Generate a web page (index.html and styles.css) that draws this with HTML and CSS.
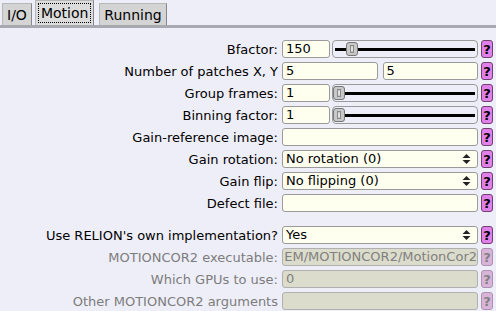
FILE: index.html
```
<!DOCTYPE html>
<html>
<head>
<meta charset="utf-8">
<link rel="stylesheet" href="styles.css">
</head>
<body>
<div class="tabs">
  <div class="tab">I/O</div>
  <div class="tab active"><span class="focus">Motion</span></div>
  <div class="tab">Running</div>
</div>
<div class="panel">
  <div class="row">
    <label class="lbl">Bfactor:</label>
    <div class="ctl">
      <div class="inp num">150</div>
      <div class="slider"><div class="track"></div><div class="knob" style="left:13px"></div></div>
    </div>
    <div class="help">?</div>
  </div>
  <div class="row">
    <label class="lbl">Number of patches X, Y</label>
    <div class="ctl gap4">
      <div class="inp half">5</div>
      <div class="inp half">5</div>
    </div>
    <div class="help">?</div>
  </div>
  <div class="row">
    <label class="lbl">Group frames:</label>
    <div class="ctl">
      <div class="inp num">1</div>
      <div class="slider"><div class="track"></div><div class="knob" style="left:0px"></div></div>
    </div>
    <div class="help">?</div>
  </div>
  <div class="row">
    <label class="lbl">Binning factor:</label>
    <div class="ctl">
      <div class="inp num">1</div>
      <div class="slider"><div class="track"></div><div class="knob" style="left:0px"></div></div>
    </div>
    <div class="help">?</div>
  </div>
  <div class="row">
    <label class="lbl">Gain-reference image:</label>
    <div class="ctl"><div class="inp wide"></div></div>
    <div class="help">?</div>
  </div>
  <div class="row">
    <label class="lbl">Gain rotation:</label>
    <div class="ctl"><div class="inp wide sel"><span>No rotation (0)</span><svg class="arr" width="9" height="12" viewBox="0 0 9 12"><path d="M0.5 5 L4.5 1 L8.5 5 Z M0.5 7 L4.5 11 L8.5 7 Z" fill="#222"/></svg></div></div>
    <div class="help">?</div>
  </div>
  <div class="row">
    <label class="lbl">Gain flip:</label>
    <div class="ctl"><div class="inp wide sel"><span>No flipping (0)</span><svg class="arr" width="9" height="12" viewBox="0 0 9 12"><path d="M0.5 5 L4.5 1 L8.5 5 Z M0.5 7 L4.5 11 L8.5 7 Z" fill="#222"/></svg></div></div>
    <div class="help">?</div>
  </div>
  <div class="row">
    <label class="lbl">Defect file:</label>
    <div class="ctl"><div class="inp wide"></div></div>
    <div class="help">?</div>
  </div>
  <div class="row spaced">
    <label class="lbl">Use RELION's own implementation?</label>
    <div class="ctl"><div class="inp wide sel"><span>Yes</span><svg class="arr" width="9" height="12" viewBox="0 0 9 12"><path d="M0.5 5 L4.5 1 L8.5 5 Z M0.5 7 L4.5 11 L8.5 7 Z" fill="#222"/></svg></div></div>
    <div class="help">?</div>
  </div>
  <div class="row dis">
    <label class="lbl">MOTIONCOR2 executable:</label>
    <div class="ctl"><div class="inp wide clip">EM/MOTIONCOR2/MotionCor2</div></div>
    <div class="help">?</div>
  </div>
  <div class="row dis">
    <label class="lbl">Which GPUs to use:</label>
    <div class="ctl"><div class="inp wide">0</div></div>
    <div class="help">?</div>
  </div>
  <div class="row dis">
    <label class="lbl">Other MOTIONCOR2 arguments</label>
    <div class="ctl"><div class="inp wide"></div></div>
    <div class="help">?</div>
  </div>
</div>
</body>
</html>
```
FILE: styles.css
```
html, body {
  margin: 0;
  padding: 0;
  background: #eeeef8;
  font-family: "DejaVu Sans", sans-serif;
  font-size: 12px;
  color: #000;
  width: 496px;
  height: 311px;
  overflow: hidden;
}
.tabs {
  display: flex;
  align-items: flex-end;
  height: 25px;
  padding-left: 2px;
  gap: 3px;
  border-bottom: 3px solid #a8a8b0;
}
.tab {
  height: 22px;
  padding: 0 4px;
  background: #d4d4d4;
  border: 1px solid #b8b8b8;
  border-bottom: none;
  border-right: 1px solid #888;
  font-size: 14px;
  line-height: 22px;
  box-sizing: border-box;
}
.tab.active {
  height: 25px;
  background: #dcdcdc;
  padding: 2px 2px 0;
  line-height: 20px;
}
.tab.active .focus {
  display: block;
  border: 1px dotted #000;
  padding: 0 2px;
  height: 20px;
  box-sizing: border-box;
  line-height: 18px;
}
.tab:nth-child(3) { margin-left: 2px; }
.panel {
  padding-top: 12px;
  display: flex;
  flex-direction: column;
  gap: 4px;
}
.row {
  display: flex;
  align-items: center;
  height: 18px;
}
.row.spaced { margin-top: 10px; }
.lbl {
  width: 282px;
  text-align: right;
  padding-right: 4px;
  box-sizing: border-box;
  white-space: nowrap;
  font-size: 13px;
}
.ctl {
  width: 196px;
  display: flex;
  gap: 2px;
  height: 18px;
}
.ctl.gap4 { gap: 5px; }
.inp {
  height: 18px;
  box-sizing: border-box;
  background: #fffff0;
  border: 1px solid #9a9a9a;
  border-radius: 3px;
  font-size: 13px;
  line-height: 16px;
  padding-left: 3px;
  white-space: nowrap;
  overflow: hidden;
}
.num { width: 48px; }
.half { flex: 1; }
.wide { flex: 1; }
.sel { display: flex; align-items: center; justify-content: space-between; padding-right: 6px; }
.arr { flex: none; }
.slider {
  flex: 1;
  position: relative;
  height: 18px;
  box-sizing: border-box;
  border: 1px solid #9a9a9a;
  border-radius: 4px;
  background: #eeeef8;
}
.track {
  position: absolute;
  left: 2px;
  right: 2px;
  top: 7px;
  height: 3px;
  background: #000;
}
.knob {
  position: absolute;
  top: 1px;
  width: 12px;
  height: 14px;
  box-sizing: border-box;
  background: #c8c8c8;
  border: 1px solid #777;
  border-radius: 3px;
  box-shadow: inset 3px 0 0 #c8c8c8, inset -3px 0 0 #c8c8c8, inset 0 2px 0 #c8c8c8, inset 0 -2px 0 #c8c8c8, inset 0 0 0 4px #888;
}
.knob::after {
  content: "";
  position: absolute;
  left: 3px;
  right: 3px;
  top: 2px;
  bottom: 2px;
  background: #e4e4e4;
  border: 1px solid #888;
  border-radius: 2px;
}
.help {
  margin-left: 3px;
  width: 12px;
  height: 18px;
  box-sizing: border-box;
  background: #e080e8;
  border: 1px solid #704070;
  border-radius: 3px;
  font-size: 13px;
  font-weight: bold;
  line-height: 17px;
  text-align: center;
  color: #000;
}
.dis .lbl { color: #7c7c7c; }
.dis .inp { background: #dcdccc; color: #808080; border-color: #b0b0b0; }
.dis .help { background: #d8b4d8; border-color: #b090b0; color: #808080; }
.clip { text-overflow: clip; direction: rtl; text-align: left; }
```
